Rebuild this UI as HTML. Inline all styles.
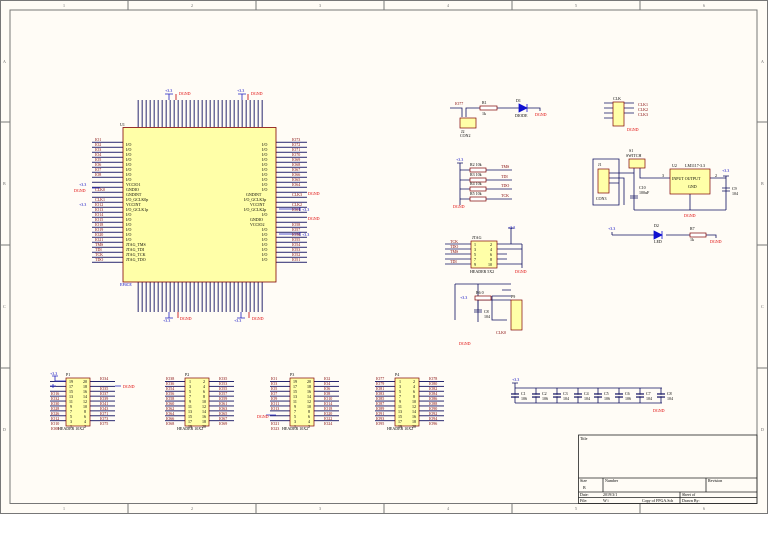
<!DOCTYPE html>
<html><head><meta charset="utf-8">
<style>
html,body{margin:0;padding:0;background:#fff;}
svg{display:block;font-family:"Liberation Serif",serif;}
.t{font-size:4px;fill:#800000;}
.b{font-size:4px;fill:#000;}
.g{font-size:4px;fill:#e00000;}
.v{font-size:4px;fill:#0000c0;}
.r{font-size:4px;fill:#666;}
</style></head><body>
<svg width="768" height="544" viewBox="0 0 768 544" xmlns="http://www.w3.org/2000/svg">
<defs>
<pattern id="vp" x="137.7" y="0" width="4" height="10" patternUnits="userSpaceOnUse"><rect x="0" y="0" width="0.9" height="10" fill="#101060"/></pattern>
<pattern id="hp" x="0" y="141.8" width="10" height="5" patternUnits="userSpaceOnUse"><rect x="0" y="0" width="10" height="0.9" fill="#101060"/></pattern>
<pattern id="hc" x="0" y="381" width="10" height="4.9" patternUnits="userSpaceOnUse"><rect x="0" y="0" width="10" height="0.9" fill="#101060"/></pattern>
</defs>
<!-- sheet -->
<rect x="0.5" y="0.5" width="767" height="513" fill="#fffcf6" stroke="#777" stroke-width="1"/>
<rect x="10" y="10" width="747" height="493.5" fill="#fffcf6" stroke="#777" stroke-width="1"/>
<g stroke="#777" stroke-width="1">
<path d="M128 0V10M256 0V10M384 0V10M512 0V10M640 0V10M128 503.5V514M256 503.5V514M384 503.5V514M512 503.5V514M640 503.5V514M0 122H10M0 245H10M0 368H10M757 122H767M757 245H767M757 368H767"/>
</g>
<g class="r">
<text x="63" y="7">1</text><text x="191" y="7">2</text><text x="319" y="7">3</text><text x="447" y="7">4</text><text x="575" y="7">5</text><text x="703" y="7">6</text>
<text x="63" y="510">1</text><text x="191" y="510">2</text><text x="319" y="510">3</text><text x="447" y="510">4</text><text x="575" y="510">5</text><text x="703" y="510">6</text>
<text x="3" y="63">A</text><text x="3" y="185">B</text><text x="3" y="308">C</text><text x="3" y="431">D</text>
<text x="761" y="63">A</text><text x="761" y="185">B</text><text x="761" y="308">C</text><text x="761" y="431">D</text>
</g>

<!-- U1 chip -->
<rect x="137" y="100" width="127" height="27" fill="url(#vp)"/>
<rect x="137" y="282" width="127" height="30" fill="url(#vp)"/>
<rect x="92" y="141" width="31" height="123" fill="url(#hp)"/>
<rect x="276" y="141" width="31" height="123" fill="url(#hp)"/>
<rect x="123" y="127.5" width="153" height="154.5" fill="#ffffa8" stroke="#800000" stroke-width="0.8"/>
<path d="M169 94V100M165 94H173M242 94V100M238 94H246M169 318V312M165 318H173M241 318V312M237 318H245M100 188H92M279 209H300M300 207V211M279 234H300M300 232V236" stroke="#2020c0" stroke-width="0.8" fill="none"/>
<path d="M176 94V100M248 94V100M178 318V312M249 318V312" stroke="#c00000" stroke-width="0.8"/>
<g class="v"><text x="165" y="92">+3.3</text><text x="237" y="92">+3.3</text><text x="163" y="322">+3.3</text><text x="234" y="322">+3.3</text><text x="79" y="186">+3.3</text><text x="302" y="211">+3.3</text><text x="302" y="236">+3.3</text><text x="79" y="206">+3.3</text></g>
<g class="g"><text x="179" y="95">DGND</text><text x="251" y="95">DGND</text><text x="180" y="320">DGND</text><text x="252" y="320">DGND</text><text x="74" y="192">DGND</text><text x="308" y="195">DGND</text><text x="308" y="220">DGND</text></g>
<text class="b" x="120" y="126">U1</text>
<text class="v" x="120" y="286">EP4CE</text>
<text class="b" x="126" y="146">I/O<tspan x="126" dy="5">I/O</tspan><tspan x="126" dy="5">I/O</tspan><tspan x="126" dy="5">I/O</tspan><tspan x="126" dy="5">I/O</tspan><tspan x="126" dy="5">I/O</tspan><tspan x="126" dy="5">I/O</tspan><tspan x="126" dy="5">I/O</tspan><tspan x="126" dy="5">VCCIO1</tspan><tspan x="126" dy="5">GNDIO</tspan><tspan x="126" dy="5">GNDINT</tspan><tspan x="126" dy="5">I/O_GCLK0p</tspan><tspan x="126" dy="5">VCCINT</tspan><tspan x="126" dy="5">I/O_GCLK1p</tspan><tspan x="126" dy="5">I/O</tspan><tspan x="126" dy="5">I/O</tspan><tspan x="126" dy="5">I/O</tspan><tspan x="126" dy="5">I/O</tspan><tspan x="126" dy="5">I/O</tspan><tspan x="126" dy="5">I/O</tspan><tspan x="126" dy="5">JTAG_TMS</tspan><tspan x="126" dy="5">JTAG_TDI</tspan><tspan x="126" dy="5">JTAG_TCK</tspan><tspan x="126" dy="5">JTAG_TDO</tspan></text>
<text class="b" x="262" y="146">I/O<tspan x="262" dy="5">I/O</tspan><tspan x="262" dy="5">I/O</tspan><tspan x="262" dy="5">I/O</tspan><tspan x="262" dy="5">I/O</tspan><tspan x="262" dy="5">I/O</tspan><tspan x="262" dy="5">I/O</tspan><tspan x="262" dy="5">I/O</tspan><tspan x="262" dy="5">I/O</tspan><tspan x="262" dy="5">I/O</tspan><tspan x="246" dy="5">GNDINT</tspan><tspan x="244" dy="5">I/O_GCLK3p</tspan><tspan x="250" dy="5">VCCINT</tspan><tspan x="244" dy="5">I/O_GCLK2p</tspan><tspan x="262" dy="5">I/O</tspan><tspan x="250" dy="5">GNDIO</tspan><tspan x="250" dy="5">VCCIO2</tspan><tspan x="262" dy="5">I/O</tspan><tspan x="262" dy="5">I/O</tspan><tspan x="262" dy="5">I/O</tspan><tspan x="262" dy="5">I/O</tspan><tspan x="262" dy="5">I/O</tspan><tspan x="262" dy="5">I/O</tspan><tspan x="262" dy="5">I/O</tspan></text>
<text class="t" x="95" y="141">IO1<tspan x="95" dy="5">IO2</tspan><tspan x="95" dy="5">IO3</tspan><tspan x="95" dy="5">IO4</tspan><tspan x="95" dy="5">IO5</tspan><tspan x="95" dy="5">IO6</tspan><tspan x="95" dy="5">IO7</tspan><tspan x="95" dy="5">IO8</tspan><tspan x="95" dy="15">CLK0</tspan><tspan x="95" dy="10">CLK1</tspan><tspan x="95" dy="5">IO12</tspan><tspan x="95" dy="5">IO13</tspan><tspan x="95" dy="5">IO14</tspan><tspan x="95" dy="5">IO15</tspan><tspan x="95" dy="5">IO18</tspan><tspan x="95" dy="5">IO19</tspan><tspan x="95" dy="5">IO20</tspan><tspan x="95" dy="5">IO21</tspan><tspan x="95" dy="5">TMS</tspan><tspan x="95" dy="5">TDI</tspan><tspan x="95" dy="5">TCK</tspan><tspan x="95" dy="5">TDO</tspan></text>
<text class="t" x="292" y="141">IO73<tspan x="292" dy="5">IO72</tspan><tspan x="292" dy="5">IO71</tspan><tspan x="292" dy="5">IO70</tspan><tspan x="292" dy="5">IO69</tspan><tspan x="292" dy="5">IO68</tspan><tspan x="292" dy="5">IO67</tspan><tspan x="292" dy="5">IO66</tspan><tspan x="292" dy="5">IO65</tspan><tspan x="292" dy="5">IO64</tspan><tspan x="292" dy="10">CLK3</tspan><tspan x="292" dy="10">CLK2</tspan><tspan x="292" dy="5">IO61</tspan><tspan x="292" dy="15">IO58</tspan><tspan x="292" dy="5">IO57</tspan><tspan x="292" dy="5">IO56</tspan><tspan x="292" dy="5">IO55</tspan><tspan x="292" dy="5">IO54</tspan><tspan x="292" dy="5">IO53</tspan><tspan x="292" dy="5">IO52</tspan><tspan x="292" dy="5">IO51</tspan></text>

<!-- CON2 / R1 / D1 -->
<g stroke="#101060" stroke-width="0.8" fill="none">
<path d="M450 108H462V117M466 117V108H480M497 108H519M527 108H540V111"/>
<path d="M604 103H634M604 108H634M604 113H634M604 118H624"/>
</g>
<rect x="480" y="106" width="17" height="4" fill="#fff" stroke="#800000" stroke-width="0.7"/>
<rect x="460" y="118" width="16" height="10" fill="#ffffa8" stroke="#800000" stroke-width="0.7"/>
<path d="M519 104L527 108L519 112Z M527 104V112" fill="#1010d0" stroke="#1010d0" stroke-width="0.8"/>
<text class="t" x="455" y="105">IO77</text><text class="b" x="482" y="104">R1</text><text class="b" x="482" y="115">1k</text><text class="b" x="516" y="102">D1</text><text class="b" x="515" y="117">DIODE</text><text class="g" x="535" y="116">DGND</text><text class="b" x="461" y="133">J2</text><text class="b" x="460" y="137">CON2</text>
<rect x="613" y="102" width="11" height="24" fill="#ffffa8" stroke="#800000" stroke-width="0.7"/>
<text class="b" x="613" y="100">CLK</text><text class="t" x="638" y="106">CLK1</text><text class="t" x="638" y="111">CLK2</text><text class="t" x="638" y="116">CLK3</text><text class="g" x="627" y="131">DGND</text>

<!-- R2-R5 -->
<g stroke="#101060" stroke-width="0.8" fill="none">
<path d="M460 163V199M457 163H463M460 170H470M460 180H470M460 189H470M460 199H470M486 170H512M486 180H512M486 189H512M486 199H512M460 199V205"/>
</g>
<rect x="470" y="168" width="16" height="4" fill="#fff" stroke="#800000" stroke-width="0.7"/><rect x="470" y="178" width="16" height="4" fill="#fff" stroke="#800000" stroke-width="0.7"/><rect x="470" y="187" width="16" height="4" fill="#fff" stroke="#800000" stroke-width="0.7"/><rect x="470" y="197" width="16" height="4" fill="#fff" stroke="#800000" stroke-width="0.7"/>
<text class="v" x="456" y="161">+3.3</text><text class="b" x="470" y="166">R2 10k</text><text class="b" x="470" y="176">R3 10k</text><text class="b" x="470" y="185">R4 10k</text><text class="b" x="470" y="195">R5 10k</text>
<text class="t" x="501" y="168">TMS</text><text class="t" x="501" y="178">TDI</text><text class="t" x="501" y="187">TDO</text><text class="t" x="501" y="197">TCK</text><text class="g" x="453" y="208">DGND</text>

<!-- power section -->
<g stroke="#101060" stroke-width="0.8" fill="none">
<path d="M593 159H619V205H593ZM609 173H634V210M609 178H624V205M609 183H619M634 168V173M640 168V178H670M634 210H726M710 178H726V210M726 176V185M723 176H729M690 194V210M634 188V198"/>
<path d="M722 188H730M722 191H730M630 196H638M630 198H638"/>
<path d="M612 235H654M666 235H690M706 235H716V238M612 232V235"/>
</g>
<rect x="598" y="169" width="11" height="24" fill="#ffffa8" stroke="#800000" stroke-width="0.7"/>
<rect x="629" y="159" width="16" height="9" fill="#ffffa8" stroke="#800000" stroke-width="0.7"/>
<rect x="670" y="169" width="40" height="25" fill="#ffffa8" stroke="#800000" stroke-width="0.7"/>
<rect x="690" y="233" width="16" height="4" fill="#fff" stroke="#800000" stroke-width="0.7"/>
<path d="M654 231L662 235L654 239Z M662 231V239" fill="#1010d0" stroke="#1010d0" stroke-width="0.8"/>
<text class="b" x="598" y="166">J1</text><text class="b" x="596" y="200">CON3</text><text class="b" x="629" y="152">S1</text><text class="b" x="626" y="157">SWITCH</text>
<text class="b" x="672" y="167">U2</text><text class="b" x="685" y="167">LM1117-3.3</text><text class="b" x="672" y="180">INPUT OUTPUT</text><text class="b" x="688" y="188">GND</text>
<text class="b" x="662" y="177">3</text><text class="b" x="715" y="177">2</text><text class="v" x="722" y="172">+3.3</text><text class="b" x="732" y="190">C9</text><text class="b" x="732" y="195">104</text>
<text class="b" x="639" y="189">C10</text><text class="b" x="639" y="194">100uF</text><text class="g" x="684" y="217">DGND</text>
<text class="v" x="608" y="230">+3.3</text><text class="b" x="654" y="227">D2</text><text class="b" x="654" y="243">LED</text><text class="b" x="690" y="230">R7</text><text class="b" x="690" y="241">1k</text><text class="g" x="710" y="243">DGND</text>

<!-- JTAG -->
<g stroke="#101060" stroke-width="0.8" fill="none">
<path d="M445 244H471M445 249H471M445 254H471M445 259H471M445 264H471M497 244H522M497 249H522M497 254H507M497 259H507M497 264H522M511 228V244M508 228H514M522 244V268"/>
<path d="M455 284H511M502 290H511M455 284V320M478 284V320M478 300H511M478 320V322"/>
<path d="M492 296H511M492 296V320H507"/>
</g>
<rect x="471" y="241" width="26" height="27" fill="#ffffa8" stroke="#800000" stroke-width="0.7"/>
<text class="b" x="472" y="239">JTAG</text><text class="b" x="470" y="273">HEADER 5X2</text><text class="g" x="515" y="273">DGND</text><text class="v" x="508" y="229">+3.3</text>
<text class="b" x="474" y="246">1<tspan x="474" dy="5">3</tspan><tspan x="474" dy="5">5</tspan><tspan x="474" dy="5">7</tspan><tspan x="474" dy="5">9</tspan></text>
<text class="b" x="490" y="246">2<tspan x="490" dy="5">4</tspan><tspan x="490" dy="5">6</tspan><tspan x="490" dy="5">8</tspan><tspan x="488" dy="5">10</tspan></text>
<text class="t" x="450" y="243">TCK</text><text class="t" x="450" y="248">TDO</text><text class="t" x="450" y="253">TMS</text><text class="t" x="450" y="263">TDI</text>
<g stroke="#101060" stroke-width="0.8" fill="none"><path d="M478 300V310M474 310H482M474 312H482"/></g>
<rect x="475" y="296" width="16" height="4" fill="#fff" stroke="#800000" stroke-width="0.7"/>
<rect x="511" y="300" width="11" height="30" fill="#ffffa8" stroke="#800000" stroke-width="0.7"/>
<text class="v" x="460" y="299">+3.3</text><text class="b" x="476" y="294">R6  0</text><text class="b" x="511" y="298">P9</text><text class="b" x="484" y="313">C8</text><text class="b" x="484" y="318">104</text><text class="t" x="496" y="334">CLK0</text><text class="g" x="459" y="345">DGND</text>

<!-- caps row -->
<g stroke="#101060" stroke-width="0.8" fill="none">
<path d="M515 388H662M515 403H662M515 383V388M512 383H518"/>
<path d="M515 388V403M536 388V403M557 388V403M578 388V403M598 388V403M619 388V403M640 388V403M661 388V403"/>
</g>
<g stroke="#101060" stroke-width="1.2"><path d="M511 394H519M511 397H519M532 394H540M532 397H540M553 394H561M553 397H561M574 394H582M574 397H582M594 394H602M594 397H602M615 394H623M615 397H623M636 394H644M636 397H644M657 394H665M657 397H665"/></g>
<rect x="511" y="394.8" width="156" height="1.4" fill="#fffcf6"/>
<text class="b" x="521" y="395">C1<tspan x="521" dy="5">106</tspan></text><text class="b" x="542" y="395">C2<tspan x="542" dy="5">106</tspan></text><text class="b" x="563" y="395">C3<tspan x="563" dy="5">104</tspan></text><text class="b" x="584" y="395">C4<tspan x="584" dy="5">104</tspan></text><text class="b" x="604" y="395">C5<tspan x="604" dy="5">106</tspan></text><text class="b" x="625" y="395">C6<tspan x="625" dy="5">106</tspan></text><text class="b" x="646" y="395">C7<tspan x="646" dy="5">104</tspan></text><text class="b" x="667" y="395">C8<tspan x="667" dy="5">104</tspan></text>
<text class="v" x="512" y="381">+3.3</text><text class="g" x="653" y="412">DGND</text>

<!-- bottom headers -->
<rect x="50" y="381" width="16" height="44" fill="url(#hc)"/><rect x="90" y="381" width="25" height="44" fill="url(#hc)"/>
<rect x="165" y="381" width="20" height="44" fill="url(#hc)"/><rect x="209" y="381" width="25" height="44" fill="url(#hc)"/>
<rect x="270" y="381" width="20" height="44" fill="url(#hc)"/><rect x="314" y="381" width="25" height="44" fill="url(#hc)"/>
<rect x="375" y="381" width="20" height="44" fill="url(#hc)"/><rect x="419" y="381" width="25" height="44" fill="url(#hc)"/>
<rect x="66" y="378" width="24" height="48" fill="#ffffa8" stroke="#800000" stroke-width="0.7"/>
<rect x="185" y="378" width="24" height="48" fill="#ffffa8" stroke="#800000" stroke-width="0.7"/>
<rect x="290" y="378" width="24" height="48" fill="#ffffa8" stroke="#800000" stroke-width="0.7"/>
<rect x="395" y="378" width="24" height="48" fill="#ffffa8" stroke="#800000" stroke-width="0.7"/>
<path d="M55 376V381H66M52 376H58M50 386H56M53 384V388M115 386H121M266 415H276" stroke="#2020c0" stroke-width="0.8" fill="none"/>
<text class="b" x="66" y="376">P1</text><text class="b" x="185" y="376">P2</text><text class="b" x="290" y="376">P3</text><text class="b" x="395" y="376">P4</text>
<text class="b" x="58" y="430">HEADER 10X2</text><text class="b" x="177" y="430">HEADER 10X2</text><text class="b" x="282" y="430">HEADER 10X2</text><text class="b" x="387" y="430">HEADER 10X2</text>
<text class="v" x="50" y="375">+3.3</text><text class="g" x="123" y="388">DGND</text><text class="g" x="257" y="418">DGND</text>
<text class="b" x="69" y="383">19<tspan x="69" dy="5">17</tspan><tspan x="69" dy="5">15</tspan><tspan x="69" dy="5">13</tspan><tspan x="69" dy="5">11</tspan><tspan x="70" dy="5">9</tspan><tspan x="70" dy="5">7</tspan><tspan x="70" dy="5">5</tspan><tspan x="70" dy="5">3</tspan><tspan x="70" dy="5">1</tspan></text>
<text class="b" x="83" y="383">20<tspan x="83" dy="5">18</tspan><tspan x="83" dy="5">16</tspan><tspan x="83" dy="5">14</tspan><tspan x="83" dy="5">12</tspan><tspan x="83" dy="5">10</tspan><tspan x="84" dy="5">8</tspan><tspan x="84" dy="5">6</tspan><tspan x="84" dy="5">4</tspan><tspan x="84" dy="5">2</tspan></text>
<text class="b" x="189" y="383">1<tspan x="189" dy="5">3</tspan><tspan x="189" dy="5">5</tspan><tspan x="189" dy="5">7</tspan><tspan x="189" dy="5">9</tspan><tspan x="188" dy="5">11</tspan><tspan x="188" dy="5">13</tspan><tspan x="188" dy="5">15</tspan><tspan x="188" dy="5">17</tspan><tspan x="188" dy="5">19</tspan></text>
<text class="b" x="203" y="383">2<tspan x="203" dy="5">4</tspan><tspan x="203" dy="5">6</tspan><tspan x="203" dy="5">8</tspan><tspan x="202" dy="5">10</tspan><tspan x="202" dy="5">12</tspan><tspan x="202" dy="5">14</tspan><tspan x="202" dy="5">16</tspan><tspan x="202" dy="5">18</tspan><tspan x="202" dy="5">20</tspan></text>
<text class="b" x="293" y="383">19<tspan x="293" dy="5">17</tspan><tspan x="293" dy="5">15</tspan><tspan x="293" dy="5">13</tspan><tspan x="293" dy="5">11</tspan><tspan x="294" dy="5">9</tspan><tspan x="294" dy="5">7</tspan><tspan x="294" dy="5">5</tspan><tspan x="294" dy="5">3</tspan><tspan x="294" dy="5">1</tspan></text>
<text class="b" x="307" y="383">20<tspan x="307" dy="5">18</tspan><tspan x="307" dy="5">16</tspan><tspan x="307" dy="5">14</tspan><tspan x="307" dy="5">12</tspan><tspan x="307" dy="5">10</tspan><tspan x="308" dy="5">8</tspan><tspan x="308" dy="5">6</tspan><tspan x="308" dy="5">4</tspan><tspan x="308" dy="5">2</tspan></text>
<text class="b" x="399" y="383">1<tspan x="399" dy="5">3</tspan><tspan x="399" dy="5">5</tspan><tspan x="399" dy="5">7</tspan><tspan x="399" dy="5">9</tspan><tspan x="398" dy="5">11</tspan><tspan x="398" dy="5">13</tspan><tspan x="398" dy="5">15</tspan><tspan x="398" dy="5">17</tspan><tspan x="398" dy="5">19</tspan></text>
<text class="b" x="413" y="383">2<tspan x="413" dy="5">4</tspan><tspan x="413" dy="5">6</tspan><tspan x="413" dy="5">8</tspan><tspan x="412" dy="5">10</tspan><tspan x="412" dy="5">12</tspan><tspan x="412" dy="5">14</tspan><tspan x="412" dy="5">16</tspan><tspan x="412" dy="5">18</tspan><tspan x="412" dy="5">20</tspan></text>
<text class="t" x="100" y="380">IO34<tspan x="100" dy="10">IO35</tspan><tspan x="100" dy="5">IO37</tspan><tspan x="100" dy="5">IO39</tspan><tspan x="100" dy="5">IO41</tspan><tspan x="100" dy="5">IO43</tspan><tspan x="100" dy="5">IO71</tspan><tspan x="100" dy="5">IO73</tspan><tspan x="100" dy="5">IO75</tspan></text>
<text class="t" x="51" y="395">IO16<tspan x="51" dy="5">IO32</tspan><tspan x="51" dy="5">IO30</tspan><tspan x="51" dy="5">IO28</tspan><tspan x="51" dy="5">IO26</tspan><tspan x="51" dy="5">IO12</tspan><tspan x="51" dy="5">IO10</tspan><tspan x="51" dy="5">IO08</tspan></text>
<text class="t" x="166" y="380">IO38<tspan x="166" dy="5">IO36</tspan><tspan x="166" dy="5">IO54</tspan><tspan x="166" dy="5">IO56</tspan><tspan x="166" dy="5">IO58</tspan><tspan x="166" dy="5">IO60</tspan><tspan x="166" dy="5">IO62</tspan><tspan x="166" dy="5">IO64</tspan><tspan x="166" dy="5">IO66</tspan><tspan x="166" dy="5">IO68</tspan></text>
<text class="t" x="219" y="380">IO35<tspan x="219" dy="5">IO53</tspan><tspan x="219" dy="5">IO55</tspan><tspan x="219" dy="5">IO57</tspan><tspan x="219" dy="5">IO59</tspan><tspan x="219" dy="5">IO61</tspan><tspan x="219" dy="5">IO63</tspan><tspan x="219" dy="5">IO65</tspan><tspan x="219" dy="5">IO67</tspan><tspan x="219" dy="5">IO69</tspan></text>
<text class="t" x="271" y="380">IO1<tspan x="271" dy="5">IO3</tspan><tspan x="271" dy="5">IO5</tspan><tspan x="271" dy="5">IO7</tspan><tspan x="271" dy="5">IO9</tspan><tspan x="271" dy="5">IO11</tspan><tspan x="271" dy="5">IO13</tspan><tspan x="271" dy="15">IO21</tspan><tspan x="271" dy="5">IO23</tspan></text>
<text class="t" x="324" y="380">IO2<tspan x="324" dy="5">IO4</tspan><tspan x="324" dy="5">IO6</tspan><tspan x="324" dy="5">IO8</tspan><tspan x="324" dy="5">IO10</tspan><tspan x="324" dy="5">IO14</tspan><tspan x="324" dy="5">IO18</tspan><tspan x="324" dy="5">IO20</tspan><tspan x="324" dy="5">IO22</tspan><tspan x="324" dy="5">IO24</tspan></text>
<text class="t" x="376" y="380">IO77<tspan x="376" dy="5">IO79</tspan><tspan x="376" dy="5">IO81</tspan><tspan x="376" dy="5">IO83</tspan><tspan x="376" dy="5">IO85</tspan><tspan x="376" dy="5">IO87</tspan><tspan x="376" dy="5">IO89</tspan><tspan x="376" dy="5">IO91</tspan><tspan x="376" dy="5">IO93</tspan><tspan x="376" dy="5">IO95</tspan></text>
<text class="t" x="429" y="380">IO78<tspan x="429" dy="5">IO80</tspan><tspan x="429" dy="5">IO82</tspan><tspan x="429" dy="5">IO84</tspan><tspan x="429" dy="5">IO86</tspan><tspan x="429" dy="5">IO88</tspan><tspan x="429" dy="5">IO90</tspan><tspan x="429" dy="5">IO92</tspan><tspan x="429" dy="5">IO94</tspan><tspan x="429" dy="5">IO96</tspan></text>

<!-- title block -->
<g stroke="#222" stroke-width="0.8" fill="none">
<rect x="578.5" y="435" width="178.5" height="68.5"/>
<path d="M578.5 478H757M578.5 492H757M578.5 497.5H757M603 478V492M706 478V492M680 492V503.5"/>
</g>
<g class="b">
<text x="580" y="440">Title</text><text x="580" y="482">Size</text><text x="583" y="489">B</text><text x="605" y="482">Number</text><text x="708" y="482">Revision</text>
<text x="580" y="496">Date:</text><text x="603" y="496">2019/3/1</text><text x="682" y="496">Sheet    of</text>
<text x="580" y="502">File:</text><text x="603" y="502">W:\</text><text x="642" y="502">Copy of FPGA.Sch</text><text x="682" y="502">Drawn By:</text>
</g>
</svg>
</body></html>
